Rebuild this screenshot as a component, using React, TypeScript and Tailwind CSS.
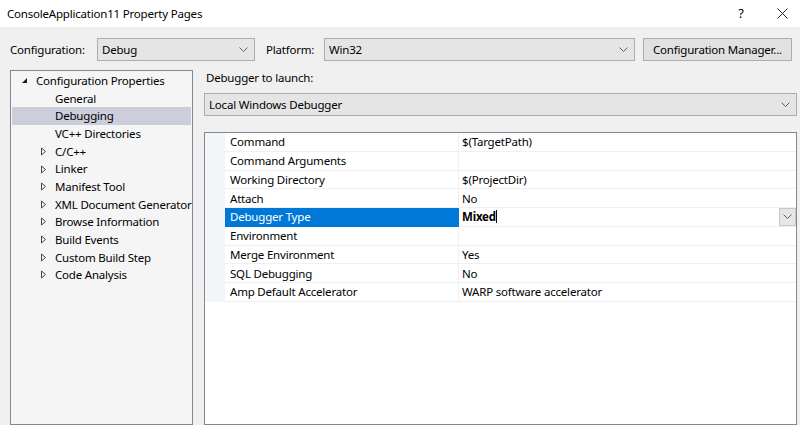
import React from 'react';

type TreeItem = { label: string; level: 0 | 1; arrow?: 'open' | 'closed'; selected?: boolean };

const treeItems: TreeItem[] = [
  { label: 'Configuration Properties', level: 0, arrow: 'open' },
  { label: 'General', level: 1 },
  { label: 'Debugging', level: 1, selected: true },
  { label: 'VC++ Directories', level: 1 },
  { label: 'C/C++', level: 1, arrow: 'closed' },
  { label: 'Linker', level: 1, arrow: 'closed' },
  { label: 'Manifest Tool', level: 1, arrow: 'closed' },
  { label: 'XML Document Generator', level: 1, arrow: 'closed' },
  { label: 'Browse Information', level: 1, arrow: 'closed' },
  { label: 'Build Events', level: 1, arrow: 'closed' },
  { label: 'Custom Build Step', level: 1, arrow: 'closed' },
  { label: 'Code Analysis', level: 1, arrow: 'closed' },
];

const props: { name: string; value: string; selected?: boolean }[] = [
  { name: 'Command', value: '$(TargetPath)' },
  { name: 'Command Arguments', value: '' },
  { name: 'Working Directory', value: '$(ProjectDir)' },
  { name: 'Attach', value: 'No' },
  { name: 'Debugger Type', value: 'Mixed', selected: true },
  { name: 'Environment', value: '' },
  { name: 'Merge Environment', value: 'Yes' },
  { name: 'SQL Debugging', value: 'No' },
  { name: 'Amp Default Accelerator', value: 'WARP software accelerator' },
];

function Chevron({ className = '' }: { className?: string }) {
  return (
    <svg width="9" height="5" viewBox="0 0 9 5" className={className}>
      <path d="M0.5 0.5 L4.5 4.5 L8.5 0.5" fill="none" stroke="#606060" strokeWidth="1" />
    </svg>
  );
}

function Combo({ text, className = '' }: { text: string; className?: string }) {
  return (
    <div
      className={`flex items-center justify-between h-[23px] border border-[#adadad] bg-[#e5e5e5] pl-[4px] pr-[6px] ${className}`}
    >
      <span>{text}</span>
      <Chevron />
    </div>
  );
}

function Arrow({ kind }: { kind: 'open' | 'closed' }) {
  if (kind === 'open') {
    return (
      <svg width="7" height="7" viewBox="0 0 7 7">
        <path d="M6 1 L6 6 L1 6 Z" fill="#1e1e1e" />
      </svg>
    );
  }
  return (
    <svg width="7" height="9" viewBox="0 0 7 9">
      <path d="M1.5 1 L5.5 4.5 L1.5 8 Z" fill="none" stroke="#444" strokeWidth="1" />
    </svg>
  );
}

export default function App() {
  return (
    <div className="w-[800px] h-[425px] overflow-hidden flex flex-col bg-[#f0f0f0] text-[11.5px] tracking-[-0.2px] text-black font-['Segoe_UI','Noto_Sans',sans-serif]">
      {/* title bar */}
      <div className="h-[27px] shrink-0 bg-white flex items-center pl-[7px]">
        <span className="flex-1">ConsoleApplication11 Property Pages</span>
        <span className="w-[14px] text-center mr-[29px] text-[13px]">?</span>
        <svg width="11" height="11" viewBox="0 0 11 11" className="mr-[12px]">
          <path d="M0.5 0.5 L10.5 10.5 M10.5 0.5 L0.5 10.5" stroke="#222" strokeWidth="1" />
        </svg>
      </div>

      {/* configuration row */}
      <div className="flex items-center mt-[11px] h-[23px] shrink-0">
        <span className="ml-[10px] w-[87px]">Configuration:</span>
        <Combo text="Debug" className="w-[158px]" />
        <span className="ml-[11px] w-[58px]">Platform:</span>
        <Combo text="Win32" className="w-[311px]" />
        <div className="ml-[8px] w-[149px] h-[23px] border border-[#adadad] bg-[#e1e1e1] flex items-center justify-center">
          Configuration Manager...
        </div>
      </div>

      {/* main area */}
      <div className="flex flex-1 mt-[9px] min-h-0">
        {/* tree */}
        <div className="ml-[10px] w-[183px] border border-[#828790] bg-[#f5f5f5] pt-[1px] px-[1px] overflow-hidden">
          {treeItems.map((it) => (
            <div
              key={it.label}
              className={`h-[17.65px] flex items-center whitespace-nowrap ${it.selected ? 'bg-[#cccedb]' : ''} ${
                it.level === 0 ? 'pl-[9px]' : 'pl-[28px]'
              }`}
            >
              <span className="w-[15px] shrink-0 flex items-center">{it.arrow && <Arrow kind={it.arrow} />}</span>
              <span>{it.label}</span>
            </div>
          ))}
        </div>

        {/* right panel */}
        <div className="ml-[11px] w-[593px] flex flex-col">
          <div className="h-[16px] pl-[2px] flex items-center">Debugger to launch:</div>
          <Combo text="Local Windows Debugger" className="mt-[7px] h-[22px] pl-[3px] pr-[6px]" />
          <div className="mt-[16px] flex-1 border border-[#828790] bg-white overflow-hidden">
            {props.map((p) => (
              <div key={p.name} className="flex h-[18.75px]">
                <div className="w-[20px] bg-[#f3f5f9]" />
                <div
                  className={`w-[234px] flex items-center pl-[5px] border-b border-r ${
                    p.selected ? 'bg-[#0078d7] text-white border-[#0078d7]' : 'border-[#f0f0f0]'
                  }`}
                >
                  {p.name}
                </div>
                <div className="flex-1 flex items-center pl-[3px] border-b border-[#f0f0f0]">
                  {p.selected ? (
                    <>
                      <span className="font-bold">{p.value}</span>
                      <span className="w-[1px] h-[13px] bg-black" />
                      <span className="flex-1" />
                      <span className="w-[17px] h-[18px] border border-[#c8c8c8] bg-[#e6e6e6] flex items-center justify-center">
                        <Chevron />
                      </span>
                    </>
                  ) : (
                    <span>{p.value}</span>
                  )}
                </div>
              </div>
            ))}
          </div>
        </div>
      </div>
    </div>
  );
}
